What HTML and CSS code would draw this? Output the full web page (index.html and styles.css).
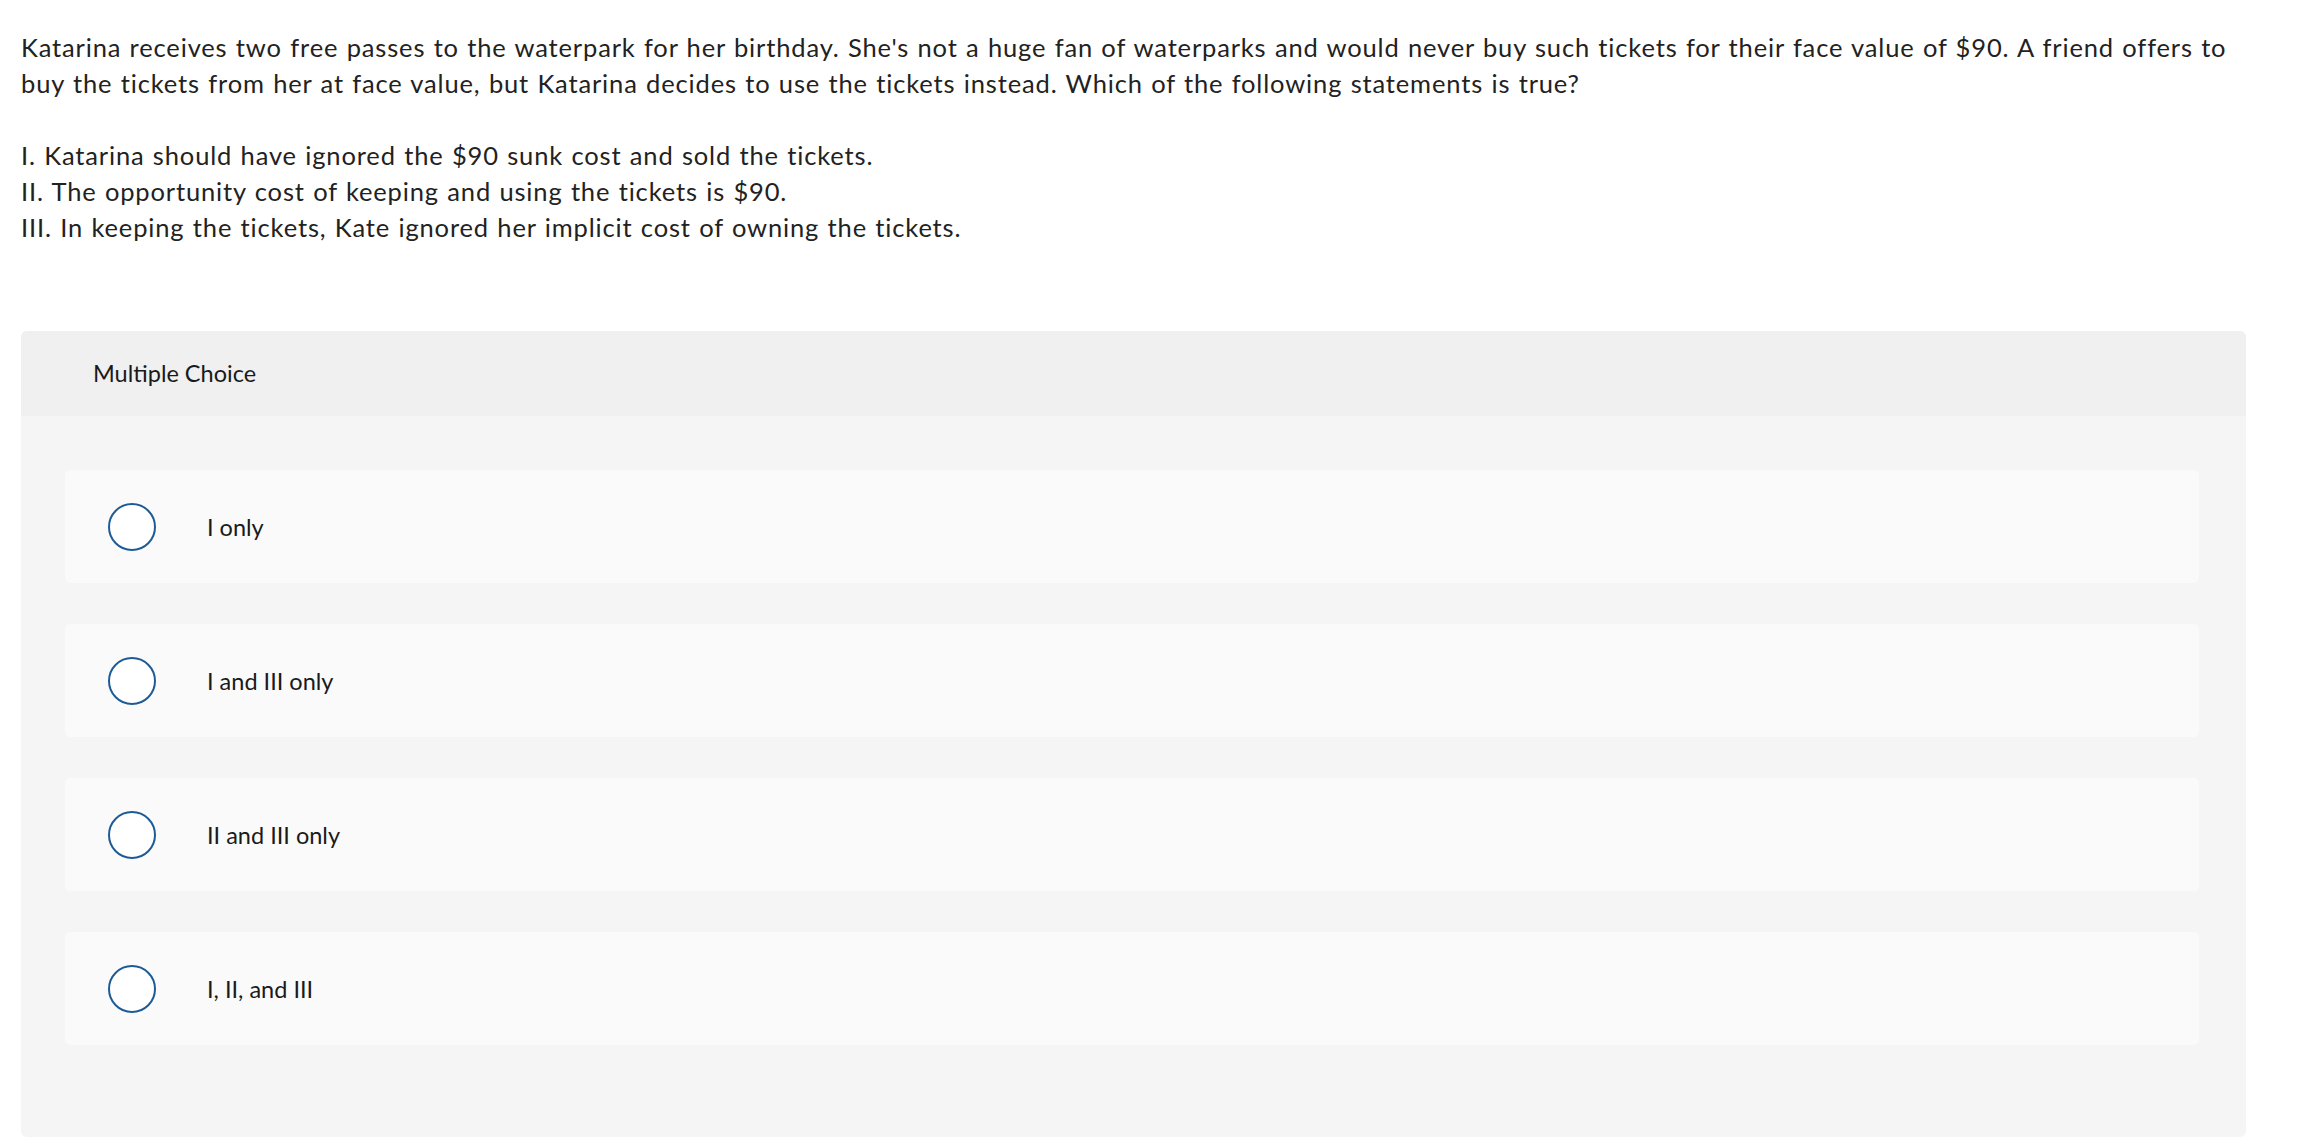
FILE: index.html
```html
<!DOCTYPE html>
<html lang="en">
<head>
<meta charset="utf-8">
<title>Multiple Choice</title>
<link rel="stylesheet" href="styles.css">
</head>
<body>
<main class="page">
  <section class="question">
    <p class="prompt">Katarina receives two free passes to the waterpark for her birthday. She's not a huge fan of waterparks and would never buy such tickets for their face value of $90. A friend offers to buy the tickets from her at face value, but Katarina decides to use the tickets instead. Which of the following statements is true?</p>
    <p class="statements">I. Katarina should have ignored the $90 sunk cost and sold the tickets.<br>II. The opportunity cost of keeping and using the tickets is $90.<br>III. In keeping the tickets, Kate ignored her implicit cost of owning the tickets.</p>
  </section>
  <section class="mc">
    <header class="mc-head">Multiple Choice</header>
    <div class="mc-body">
      <label class="choice"><span class="radio"></span><span class="choice-text">I only</span></label>
      <label class="choice"><span class="radio"></span><span class="choice-text">I and III only</span></label>
      <label class="choice"><span class="radio"></span><span class="choice-text">II and III only</span></label>
      <label class="choice"><span class="radio"></span><span class="choice-text">I, II, and III</span></label>
    </div>
  </section>
</main>
</body>
</html>
```
FILE: styles.css
```css
html, body {
  margin: 0;
  padding: 0;
  background: #ffffff;
}
body {
  font-family: "Lato", "Liberation Sans", sans-serif;
  font-size: 24px;
  line-height: 36px;
  color: #222222;
}
.page {
  padding: 29px 68px 0 21px;
}
.question p {
  margin: 0;
  font-size: 25.5px;
  letter-spacing: 0.85px;
  word-spacing: 1px;
}
.prompt {
  margin-bottom: 36px !important;
}
.mc {
  margin-top: 86px;
  border-radius: 6px;
  background: #f5f5f5;
  overflow: hidden;
}
.mc-head {
  background: #f0f0f0;
  padding: 24px 0 25px 72px;
  color: #1a1a1a;
  font-size: 23.5px;
}
.mc-body {
  padding: 54px 47px 92px 44px;
  display: flex;
  flex-direction: column;
  gap: 41px;
}
.choice {
  display: flex;
  align-items: center;
  height: 113px;
  padding-left: 43px;
  background: #fafafa;
  border-radius: 5px;
  color: #1a1a1a;
  font-size: 23.5px;
}
.radio {
  box-sizing: border-box;
  width: 48px;
  height: 48px;
  border: 2px solid #1d5b97;
  border-radius: 50%;
  background: #ffffff;
  flex: none;
}
.choice-text {
  margin-left: 51px;
}
```
